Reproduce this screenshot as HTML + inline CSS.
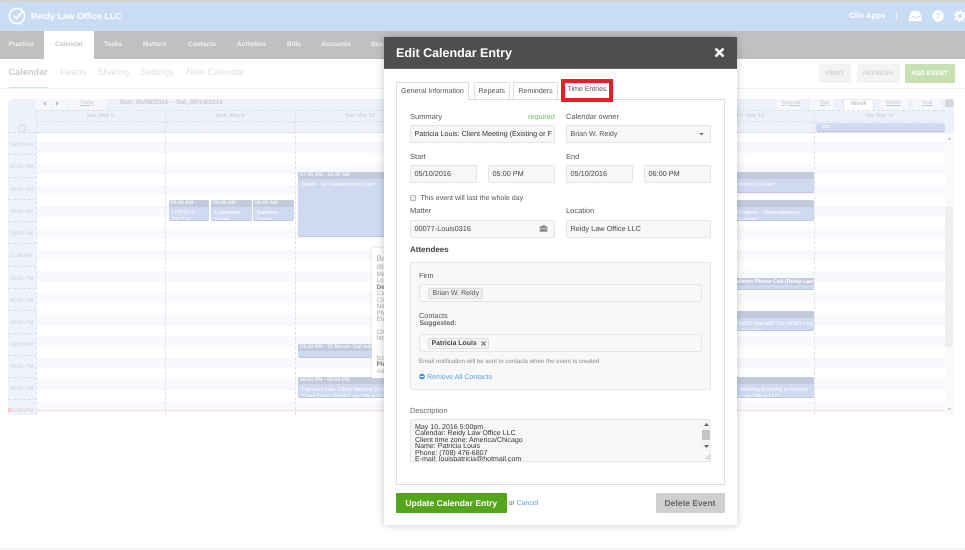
<!DOCTYPE html>
<html><head><meta charset="utf-8"><style>
html,body{margin:0;padding:0;background:#fff}
#p{position:relative;width:965px;height:550px;overflow:hidden;background:#fff;font-family:"Liberation Sans",sans-serif;filter:blur(.35px);text-rendering:geometricPrecision}
#p div{position:absolute;box-sizing:border-box;white-space:nowrap}
.nav{top:31px;height:28px;line-height:27px;font-size:6.55px;font-weight:bold;color:#f1f1f3}
.sub{top:66px;font-size:9.2px;line-height:13px;color:#dfdfdf}
.tm{left:10px;width:26px;font-size:5.45px;color:#cfd1d6;line-height:8px;margin-top:1px}
.st{left:36px;width:909px;height:10.5px;background:#f8f9fc}
.dash{left:8px;width:28px;height:0;border-top:1px dashed #d9dde6}
.v{top:111px;height:304px;width:0;border-left:1px dashed #e0e1e6}
.ev{background:#cfdaf1;border-radius:2px;overflow:hidden;color:#fff;font-size:5.5px;border-bottom:1px solid #bfc7da}
.eh{left:0;right:0;top:0;height:7px;background:#c3cadc;color:#f4f5f8;font-weight:bold;font-size:5.2px;line-height:7px;padding-left:2px}
.eb{left:3.5px;top:10px;line-height:7px;font-size:5.5px}
.tbtn{top:64px;height:19px;line-height:19px;text-align:center;font-size:6.3px;font-weight:bold;border-radius:1px}
.hd{top:112px;font-size:5.4px;color:#c6c8cf;line-height:8px}
.lk{top:98.5px;font-size:5.4px;color:#c6c8cf;line-height:9px;text-decoration:underline}
.lab{font-size:7.5px;line-height:10px;color:#555}
.inp{height:18px;background:#f7f7f7;border:1px solid #e5e5e5;border-radius:2px;font-size:7.3px;line-height:16px;color:#444;padding-left:3.5px;overflow:hidden}
.tab{top:82px;height:17px;background:#fff;border:1px solid #ddd;border-bottom:0;font-size:7.1px;line-height:17px;text-align:center;color:#555}
.pop{left:5px;font-size:6.4px;line-height:6.5px;color:#aaa}
</style></head><body><div id="p">
<div style="left:0;top:0;width:965px;height:2px;background:#d4d4d4"></div>
<div style="left:0;top:2px;width:965px;height:29px;background:#c8dcf3"></div>
<svg style="position:absolute;left:8px;top:6px" width="20" height="20" viewBox="0 0 20 20"><circle cx="9" cy="10" r="7.6" fill="none" stroke="#fff" stroke-width="1.6"/><path d="M5.5 9.5l3 3 6-7" fill="none" stroke="#fff" stroke-width="1.7"/></svg>
<div style="left:31px;top:9.5px;font-size:8.8px;line-height:13px;font-weight:bold;color:#fff">Reidy Law Office LLC</div>
<div style="left:849px;top:10px;font-size:7.9px;line-height:12px;font-weight:bold;color:#fff">Clio Apps</div>
<div style="left:896px;top:11px;width:1px;height:10px;background:#e6eefa"></div>
<svg style="position:absolute;left:908px;top:9px" width="57" height="14" viewBox="0 0 57 14"><path d="M1 8l2.5-6h7.5l2.5 6v4h-12.500z" fill="#fff"/><path d="M4 7.500h2.500l1 1.500h1.500l1-1.500h2.500" stroke="#c8dcf3" stroke-width="1" fill="none"/><circle cx="30" cy="7" r="5.700" fill="#fff"/><text x="30" y="10" font-size="8.500" font-weight="bold" fill="#c8dcf3" text-anchor="middle" font-family="Liberation Sans">?</text><circle cx="52" cy="7" r="3.300" fill="none" stroke="#fff" stroke-width="2.400"/><circle cx="52" cy="7" r="5.200" fill="none" stroke="#fff" stroke-width="1.600" stroke-dasharray="2 2.080"/></svg>
<div style="left:0;top:31px;width:965px;height:28px;background:#c0bfc2"></div>
<div style="left:44px;top:31px;width:49.500px;height:28px;background:#fff"></div>
<div class="nav" style="left:8.500px">Practice</div>
<div class="nav" style="left:55px;color:#c6c6c8">Calendar</div>
<div class="nav" style="left:104px">Tasks</div>
<div class="nav" style="left:143px">Matters</div>
<div class="nav" style="left:188px">Contacts</div>
<div class="nav" style="left:237px">Activities</div>
<div class="nav" style="left:287px">Bills</div>
<div class="nav" style="left:321px">Accounts</div>
<div class="nav" style="left:371px">Doc</div>
<div class="sub" style="left:8.500px;font-weight:bold;color:#ccc">Calendar</div>
<div class="sub" style="left:60.500px">Feeds</div>
<div class="sub" style="left:97.500px">Sharing</div>
<div class="sub" style="left:140.500px">Settings</div>
<div class="sub" style="left:186.500px">New Calendar</div>
<div style="left:8.500px;top:87px;width:39px;height:1px;background:#cfe0f5"></div>
<div style="left:0;top:88px;width:965px;height:1px;background:#f0f0f0"></div>
<div class="tbtn" style="left:819px;width:32px;background:#f3f3f3;color:#d2d2d2">PRINT</div>
<div class="tbtn" style="left:856.500px;width:43px;background:#f3f3f3;color:#d2d2d2">REFRESH</div>
<div class="tbtn" style="left:904.500px;width:50px;background:#c6e2b4;color:#fff">ADD EVENT</div>

<div style="left:8px;top:99px;width:946px;height:12px;background:#eef1fc;border-radius:4px 4px 0 0"></div>
<div style="left:8px;top:111px;width:946px;height:22px;background:#eef1fc"></div>
<div style="left:8px;top:133px;width:28px;height:282px;background:#eef2fc"></div>
<div style="left:35px;top:99px;width:16px;height:11px;background:#f6f7fb"></div>
<div style="left:52px;top:99px;width:16px;height:11px;background:#f6f7fb"></div>
<div style="left:69px;top:99px;width:38px;height:11px;background:#f6f7fb"></div>
<svg style="position:absolute;left:38px;top:99px" width="26" height="9"><path d="M5 4.500l3-2.500v5zM21 4.500l-3-2.500v5z" fill="#bfc2ca"/></svg>
<div class="lk" style="left:80px">Today</div>
<div style="left:119.500px;top:98px;font-size:6.600px;line-height:9px;color:#c8cad2;font-weight:bold">Sun, 05/08/2016 – Sat, 05/14/2016</div>
<div style="left:776px;top:99px;width:24px;height:11px;background:#f6f7fb"></div>
<div style="left:810px;top:99px;width:24px;height:11px;background:#f6f7fb"></div>
<div style="left:843px;top:99px;width:31px;height:12px;background:#fff;border:1px solid #e3e6ef;border-bottom:0"></div>
<div style="left:880px;top:99px;width:28px;height:11px;background:#f6f7fb"></div>
<div style="left:913px;top:99px;width:28px;height:11px;background:#f6f7fb"></div>
<div class="lk" style="left:781.700px">Agenda</div>
<div class="lk" style="left:820px">Day</div>
<div style="left:850.700px;top:99px;font-size:6.200px;line-height:9px;font-weight:bold;color:#c6c8cf">Week</div>
<div class="lk" style="left:886px">Month</div>
<div class="lk" style="left:922px">Year</div>
<div style="left:945px;top:99px;width:9px;height:8px;background:#d8d9de;border-radius:2px 2px 0 0"></div>
<div style="left:36px;top:110px;width:909px;height:0;border-top:1px dashed #dcdfe9"></div>
<div style="left:36px;top:121px;width:909px;height:0;border-top:1px dashed #dcdfe9"></div>
<div style="left:8px;top:132px;width:937px;height:0;border-top:1px dashed #d9dde6"></div>
<svg style="position:absolute;left:17px;top:123px" width="10" height="10"><circle cx="5" cy="5" r="3.300" fill="none" stroke="#d8dbe2"/><path d="M5 3v2l1.500 1" stroke="#d8dbe2" fill="none" stroke-width=".7"/></svg>
<div class="hd" style="left:86.500px">Sun, May 8</div>
<div class="hd" style="left:216px">Mon, May 9</div>
<div class="hd" style="left:345px">Tue, May 10</div>
<div class="hd" style="left:737px">Fri, May 13</div>
<div class="hd" style="left:865px">Sat, May 14</div>

<div class="st" style="top:142px"></div><div class="st" style="top:163.500px"></div><div class="st" style="top:184.500px"></div><div class="st" style="top:206px"></div><div class="st" style="top:228px"></div><div class="st" style="top:249.500px"></div><div class="st" style="top:271px"></div><div class="st" style="top:292.500px"></div><div class="st" style="top:315px"></div><div class="st" style="top:336px"></div><div class="st" style="top:357.500px"></div><div class="st" style="top:379px"></div><div class="st" style="top:401px"></div>
<div class="dash" style="top:154px"></div><div class="dash" style="top:177px"></div><div class="dash" style="top:199px"></div><div class="dash" style="top:221px"></div><div class="dash" style="top:243px"></div><div class="dash" style="top:266px"></div><div class="dash" style="top:288px"></div><div class="dash" style="top:310px"></div><div class="dash" style="top:333px"></div><div class="dash" style="top:355px"></div><div class="dash" style="top:377px"></div><div class="dash" style="top:399px"></div>
<div class="tm" style="top:140px">06:00 AM</div><div class="tm" style="top:162px">07:00 AM</div><div class="tm" style="top:184.500px">08:00 AM</div><div class="tm" style="top:207px">09:00 AM</div><div class="tm" style="top:229px">10:00 AM</div><div class="tm" style="top:251px">11:00 AM</div><div class="tm" style="top:273.500px">12:00 PM</div><div class="tm" style="top:296px">01:00 PM</div><div class="tm" style="top:318px">02:00 PM</div><div class="tm" style="top:340px">03:00 PM</div><div class="tm" style="top:362px">04:00 PM</div><div class="tm" style="top:384px">05:00 PM</div><div class="tm" style="top:406px">06:00 PM</div>
<div class="v" style="left:36px"></div><div class="v" style="left:164.500px"></div><div class="v" style="left:294.500px"></div><div class="v" style="left:814px"></div>
<div style="left:8px;top:410px;width:937px;height:1px;background:#fbdde0"></div>
<div style="left:8px;top:408px;width:3px;height:4px;background:#f8c8c8"></div>
<div style="left:945px;top:133px;width:9px;height:282px;background:#fafafa"></div>
<div style="left:945px;top:207px;width:8px;height:140px;background:#eeeeee"></div>
<svg style="position:absolute;left:946px;top:135px" width="7" height="280"><path d="M1.500 5l2-3 2 3zM1.500 273l2 3 2-3z" fill="#d0d0d0"/></svg>

<div class="ev" style="left:816px;top:123px;width:129px;height:8.500px;border-radius:3px;padding-left:6px;line-height:8px">Out</div>
<div class="ev" style="left:298px;top:172px;width:90px;height:65px"><div class="eh">07:45 AM - 10:45 AM</div><div class="eb">Owen - AP Government Exam</div></div>
<div class="ev" style="left:168.500px;top:200px;width:40.500px;height:21px"><div class="eh">09:00 AM -</div><div class="eb">LIPPOLD -<br>PATTIH</div></div>
<div class="ev" style="left:211px;top:200px;width:40.500px;height:21px"><div class="eh">09:00 AM -</div><div class="eb">Luscombe -<br>Estate</div></div>
<div class="ev" style="left:253px;top:200px;width:41px;height:21px"><div class="eh">09:00 AM -</div><div class="eb">Sanchez -<br>Status</div></div>
<div class="ev" style="left:298px;top:344px;width:90px;height:14px"><div class="eh">03:30 PM - 15 Minute Call with</div></div>
<div class="ev" style="left:298px;top:377px;width:90px;height:21px"><div class="eh">05:00 PM - 06:00 PM</div><div class="eb">Patricia Louis: Client Meeting (Exis<br>Client Only) (Reidy Law Office LLC)</div></div>
<div class="ev" style="left:700px;top:172px;width:113.500px;height:21px"><div class="eh"></div><div class="eb" style="left:37px">ronomics Exam</div></div>
<div class="ev" style="left:700px;top:200px;width:113.500px;height:21px"><div class="eh"></div><div class="eb" style="left:37px">m Harris - Teleconference<br>Sunday)</div></div>
<div class="ev" style="left:700px;top:278px;width:113.500px;height:12px"><div class="eh"></div><div class="eb" style="left:37px;top:0;color:#fff;font-size:5.500px;line-height:8px;font-weight:bold">alston Phone Call (Reidy Law</div></div>
<div class="ev" style="left:700px;top:311px;width:113.500px;height:20px"><div class="eh"></div><div class="eb" style="left:37px">00050-Darnell0715: IRMO Lisa<br>&amp; Darnell)</div></div>
<div class="ev" style="left:700px;top:377px;width:113.500px;height:20.500px"><div class="eh"></div><div class="eb" style="left:37px">: Meeting (Existing or Former<br>y Law Office LLC)</div></div>

<div style="left:371.500px;top:248px;width:20px;height:130px;background:#fff;box-shadow:0 0 3px #ddd">
<div class="pop" style="top:7px;font-size:8px;line-height:8px;color:#b0b0b0">Br</div>
<div class="pop" style="top:17px">05</div><div class="pop" style="top:23.500px">Ma</div><div class="pop" style="top:30px">Lo</div><div class="pop" style="top:36.500px;color:#888;font-weight:bold">De</div><div class="pop" style="top:43px;color:#bbb">Ca</div><div class="pop" style="top:49.500px;color:#bbb">Cli</div><div class="pop" style="top:56px">Na</div><div class="pop" style="top:62.500px">Ph</div><div class="pop" style="top:69px">Em</div><div class="pop" style="top:82px">Ch</div><div class="pop" style="top:88px">htt</div><div class="pop" style="top:108px">[co</div><div class="pop" style="top:114px;color:#888;font-weight:bold">Ple</div><div class="pop" style="top:120.500px;color:#bbb">Ad</div>
</div>

<!-- modal -->
<div style="left:383.700px;top:37px;width:353.500px;height:488px;background:#fff;box-shadow:0 0 8px rgba(0,0,0,.22)"></div>
<div style="left:383.700px;top:37px;width:353.500px;height:31.500px;background:#4d4e50;border-bottom:1px solid #666"></div>
<div style="left:396px;top:44px;font-size:12.500px;line-height:18px;font-weight:bold;color:#fff">Edit Calendar Entry</div>
<svg style="position:absolute;left:714px;top:47px" width="11" height="11"><path d="M1.500 1.500l8 8M9.500 1.500l-8 8" stroke="#fff" stroke-width="2.600"/></svg>

<div style="left:396px;top:99px;width:329px;height:386px;border:1px solid #ddd"></div>
<div class="tab" style="left:396px;width:73px;height:18px">General Information</div>
<div class="tab" style="left:474px;width:35.500px">Repeats</div>
<div class="tab" style="left:513px;width:45px">Reminders</div>
<div style="left:561px;top:79px;width:52px;height:23px;border:4.500px solid #ed1c24;background:#fff;font-size:7px;line-height:14px;text-align:center;color:#555">Time Entries</div>

<div class="lab" style="left:410px;top:111.500px">Summary</div>
<div class="lab" style="left:528px;top:111.500px;color:#7cb56a;font-size:7.300px">required</div>
<div class="lab" style="left:566px;top:111.500px">Calendar owner</div>
<div class="inp" style="left:410px;top:125px;width:145px;color:#333;font-size:7.200px">Patricia Louis: Client Meeting (Existing or F</div>
<div class="inp" style="left:566px;top:125px;width:145px;color:#555;font-size:7.100px">Brian W. Reidy</div>
<svg style="position:absolute;left:698px;top:131px" width="8" height="6"><path d="M1 2h5l-2.500 2.500z" fill="#777"/></svg>
<div class="lab" style="left:410px;top:151.500px">Start</div>
<div class="lab" style="left:566px;top:151.500px">End</div>
<div class="inp" style="left:410px;top:164.500px;width:67px">05/10/2016</div>
<div class="inp" style="left:488px;top:164.500px;width:67px">05:00 PM</div>
<div class="inp" style="left:566px;top:164.500px;width:67px">05/10/2016</div>
<div class="inp" style="left:644px;top:164.500px;width:67px">06:00 PM</div>
<div style="left:410px;top:195px;width:6px;height:6px;background:#eee;border:1px solid #bbb;border-radius:1px"></div>
<div class="lab" style="left:420.500px;top:194px;font-size:7.050px">This event will last the whole day</div>
<div class="lab" style="left:410px;top:206px">Matter</div>
<div class="lab" style="left:566px;top:206px">Location</div>
<div class="inp" style="left:410px;top:220px;width:145px">00077-Louis0316</div>
<svg style="position:absolute;left:539px;top:224px" width="9" height="9"><path d="M1 2.500h7v5h-7zM3.200 2.500v-1h2.600v1" fill="#8a8a8a" stroke="#8a8a8a" stroke-width=".6"/><path d="M1 4.800h7" stroke="#eee" stroke-width=".6"/></svg>
<div class="inp" style="left:566px;top:220px;width:145px">Reidy Law Office LLC</div>
<div style="left:410px;top:244.500px;font-size:8px;line-height:10px;font-weight:bold;color:#444">Attendees</div>

<div style="left:410px;top:262px;width:301px;height:128px;background:#f8f8f8;border:1px solid #e6e6e6;border-radius:2px"></div>
<div class="lab" style="left:419px;top:270.500px;font-size:7.300px">Firm</div>
<div class="inp" style="left:419px;top:284px;width:283px;background:#f9f9f9;border-radius:3px"></div>
<div style="left:428px;top:288px;width:55px;height:11px;background:#eee;border:1px solid #ddd;border-radius:2px;font-size:7.050px;line-height:9px;padding-left:3.500px;color:#555">Brian W. Reidy</div>
<div class="lab" style="left:419px;top:311px;font-size:7.300px">Contacts</div>
<div class="lab" style="left:419.500px;top:319px;font-size:6.800px;font-weight:bold;color:#666">Suggested:</div>
<div class="inp" style="left:419px;top:334px;width:283px;background:#f9f9f9;border-radius:3px"></div>
<div style="left:428px;top:338px;width:60.500px;height:11px;background:#f3f3f3;border:1px solid #ddd;border-radius:2px;font-size:6.900px;line-height:9px;padding-left:2.500px;color:#444;font-weight:bold">Patricia Louis</div>
<svg style="position:absolute;left:479.500px;top:340px" width="7" height="7"><path d="M1.500 1.500l4 4M5.500 1.500l-4 4" stroke="#666" stroke-width="1"/></svg>
<div class="lab" style="left:419px;top:357px;font-size:6.100px;color:#888">Email notification will be sent to contacts when the event is created.</div>
<svg style="position:absolute;left:419px;top:373px" width="7" height="7"><circle cx="3" cy="3.500" r="2.900" fill="#4a90d9"/><path d="M1.200 3.500h3.600" stroke="#fff"/></svg>
<div class="lab" style="left:427px;top:372.500px;color:#5b9bdf;font-size:7px">Remove All Contacts</div>

<div class="lab" style="left:410px;top:406px;font-size:7.500px;color:#666">Description</div>
<div style="left:410px;top:419px;width:301px;height:43px;background:#f7f7f7;border:1px solid #e5e5e5;border-radius:2px;overflow:hidden;font-size:7.050px;line-height:6.500px;color:#333;padding:4.500px 0 0 4px">May 10, 2016 5:00pm<br>Calendar: Reidy Law Office LLC<br>Client time zone: America/Chicago<br>Name: Patricia Louis<br>Phone: (708) 476-6807<br>E-mail: louispatricia@hotmail.com</div>
<div style="left:702px;top:420px;width:8.500px;height:31px;background:#f4f4f4"></div>
<div style="left:702px;top:430px;width:8px;height:10px;background:#c4c4c4"></div>
<svg style="position:absolute;left:702px;top:420px" width="10" height="41"><path d="M2 6l2.500-3 2.500 3zM2 25l2.500 3 2.500-3z" fill="#666"/><path d="M8 35l-4 4M8 38l-1.500 1.500" stroke="#aaa" stroke-width=".7"/></svg>

<div style="left:396px;top:493px;width:110.500px;height:20px;background:#55a51c;border-radius:1px;font-size:8.500px;line-height:20px;font-weight:bold;color:#fff;text-align:center">Update Calendar Entry</div>
<div style="left:508.500px;top:500px;font-size:7px;line-height:8px;color:#666">or <span style="color:#5b9bdf">Cancel</span></div>
<div style="left:655.500px;top:493px;width:69px;height:20px;background:#cfcfcf;border-radius:1px;font-size:8.500px;line-height:20px;font-weight:bold;color:#666;text-align:center">Delete Event</div>
<div style="left:0;top:548px;width:965px;height:1px;background:#f2f2f2"></div>
</div></body></html>
